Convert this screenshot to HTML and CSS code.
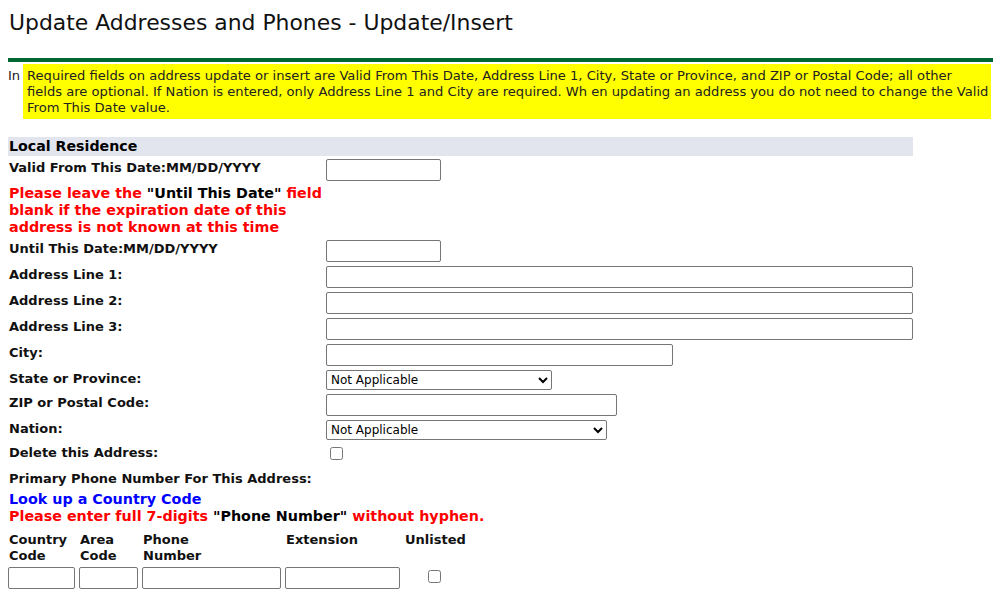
FILE: index.html
```html
<!DOCTYPE html>
<html lang="en">
<head>
<meta charset="utf-8">
<title>Update Addresses and Phones - Update/Insert</title>
<link rel="stylesheet" href="styles.css">
</head>
<body>
<h1 class="page-title">Update Addresses and Phones - Update/Insert</h1>
<div class="rule"></div>
<div class="info">
  <span class="info-lead">In</span>
  <div class="notice">Required fields on address update or insert are Valid From This Date, Address Line 1, City, State or Province, and ZIP or Postal Code; all other fields are optional. If Nation is entered, only Address Line 1 and City are required. Wh en updating an address you do not need to change the Valid From This Date value.</div>
</div>

<div class="section-head">Local Residence</div>
<form class="addr-form">
  <label class="lbl" for="from">Valid From This Date:MM/DD/YYYY</label>
  <div class="fld"><input id="from" class="txt w-date" type="text"></div>

  <div class="warn">Please leave the <span class="quote">"Until This Date"</span> field blank if the expiration date of this address is not known at this time</div>
  <div></div>

  <label class="lbl" for="until">Until This Date:MM/DD/YYYY</label>
  <div class="fld"><input id="until" class="txt w-date" type="text"></div>

  <label class="lbl" for="a1">Address Line 1:</label>
  <div class="fld"><input id="a1" class="txt w-addr" type="text"></div>

  <label class="lbl" for="a2">Address Line 2:</label>
  <div class="fld"><input id="a2" class="txt w-addr" type="text"></div>

  <label class="lbl" for="a3">Address Line 3:</label>
  <div class="fld"><input id="a3" class="txt w-addr" type="text"></div>

  <label class="lbl" for="city">City:</label>
  <div class="fld"><input id="city" class="txt w-city" type="text"></div>

  <label class="lbl" for="state">State or Province:</label>
  <div class="fld"><select id="state" class="sel w-state"><option>Not Applicable</option></select></div>

  <label class="lbl" for="zip">ZIP or Postal Code:</label>
  <div class="fld"><input id="zip" class="txt w-zip" type="text"></div>

  <label class="lbl" for="nation">Nation:</label>
  <div class="fld"><select id="nation" class="sel w-nation"><option>Not Applicable</option></select></div>

  <label class="lbl" for="del">Delete this Address:</label>
  <div class="fld fld-chk"><input id="del" class="chk" type="checkbox"></div>

  <div class="lbl">Primary Phone Number For This Address:</div>
  <div></div>
</form>

<div class="phone-note">
  <a class="lookup" href="#">Look up a Country Code</a><br>
  <span class="red">Please enter full 7-digits </span>"Phone Number"<span class="red"> without hyphen.</span>
</div>

<div class="phone-grid">
  <div class="ph-head">Country<br>Code</div>
  <div class="ph-head">Area<br>Code</div>
  <div class="ph-head">Phone<br>Number</div>
  <div class="ph-head">Extension</div>
  <div class="ph-head">Unlisted</div>

  <div><input class="txt w-cc" type="text" aria-label="Country Code"></div>
  <div><input class="txt w-area" type="text" aria-label="Area Code"></div>
  <div><input class="txt w-phone" type="text" aria-label="Phone Number"></div>
  <div><input class="txt w-ext" type="text" aria-label="Extension"></div>
  <div class="ph-center"><input class="chk" type="checkbox" aria-label="Unlisted"></div>
</div>
</body>
</html>
```

FILE: styles.css
```css
body {
  margin: 8px;
  font-family: "DejaVu Sans", Verdana, sans-serif;
  color: #000;
  background: #fff;
}

.page-title {
  margin: 0;
  padding-left: 1px;
  font-size: 21.9px;
  font-weight: normal;
  line-height: 30px;
  color: #111;
}

.rule {
  height: 4px;
  margin-top: 20px;
  background: #006633;
}

.info {
  display: flex;
  margin-top: 2px;
  font-size: 13.1px;
  line-height: 16px;
}

.info-lead {
  flex: 0 0 15px;
  white-space: nowrap;
  padding-top: 4px;
  color: #1a1a1a;
}

.notice {
  flex: 1;
  margin-right: 2px;
  padding: 4px 0 3px 4px;
  background: #ffff00;
  color: #222;
}

.section-head {
  width: 904px;
  height: 19px;
  margin-top: 18px;
  padding-left: 1px;
  background: #e3e5ee;
  font-size: 14.2px;
  font-weight: bold;
  line-height: 19px;
}

.addr-form {
  display: grid;
  grid-template-columns: 318px 587px;
  row-gap: 4px;
  margin: 3px 0 0 0;
}

.lbl {
  padding-left: 1px;
  font-size: 13px;
  font-weight: bold;
  line-height: 17px;
  color: #111;
}

.fld-chk {
  min-height: 22px;
}

.warn {
  padding-left: 1px;
  font-size: 14.3px;
  font-weight: bold;
  line-height: 17px;
  color: #ff0000;
}

.quote {
  color: #000;
}

.txt {
  display: block;
  box-sizing: border-box;
  height: 22px;
  margin: 0;
  padding: 1px 2px;
  border: 1px solid #767676;
  border-radius: 2px;
  background: #fff;
  font: 13px "DejaVu Sans", sans-serif;
}

.sel {
  display: block;
  box-sizing: border-box;
  height: 20px;
  margin: 0;
  border: 1px solid #767676;
  border-radius: 2px;
  background: #fff;
  font: 12px "DejaVu Sans", sans-serif;
  color: #000;
}

.chk {
  display: block;
  width: 13px;
  height: 13px;
  margin: 3px 3px 3px 4px;
}

.w-date { width: 115px; }
.w-addr { width: 587px; }
.w-city { width: 347px; }
.w-zip { width: 291px; }
.w-state { width: 226px; }
.w-nation { width: 281px; }
.w-cc { width: 67px; }
.w-area { width: 59px; }
.w-phone { width: 139px; }
.w-ext { width: 115px; }

.phone-note {
  margin-top: 4px;
  padding-left: 1px;
  font-size: 14.3px;
  font-weight: bold;
  line-height: 17px;
  color: #000;
}

.lookup {
  color: #0000ff;
  text-decoration: none;
}

.red {
  color: #ff0000;
}

.phone-grid {
  display: grid;
  grid-template-columns: 69px 61px 141px 117px 61px;
  column-gap: 2px;
  row-gap: 3px;
  margin-top: 7px;
  width: max-content;
}

.ph-head {
  padding-left: 1px;
  font-size: 13px;
  font-weight: bold;
  line-height: 16px;
  color: #111;
}

.ph-center {
  display: flex;
  justify-content: center;
}

.ph-center .chk {
  margin: 3px 0 0 0;
}
```
